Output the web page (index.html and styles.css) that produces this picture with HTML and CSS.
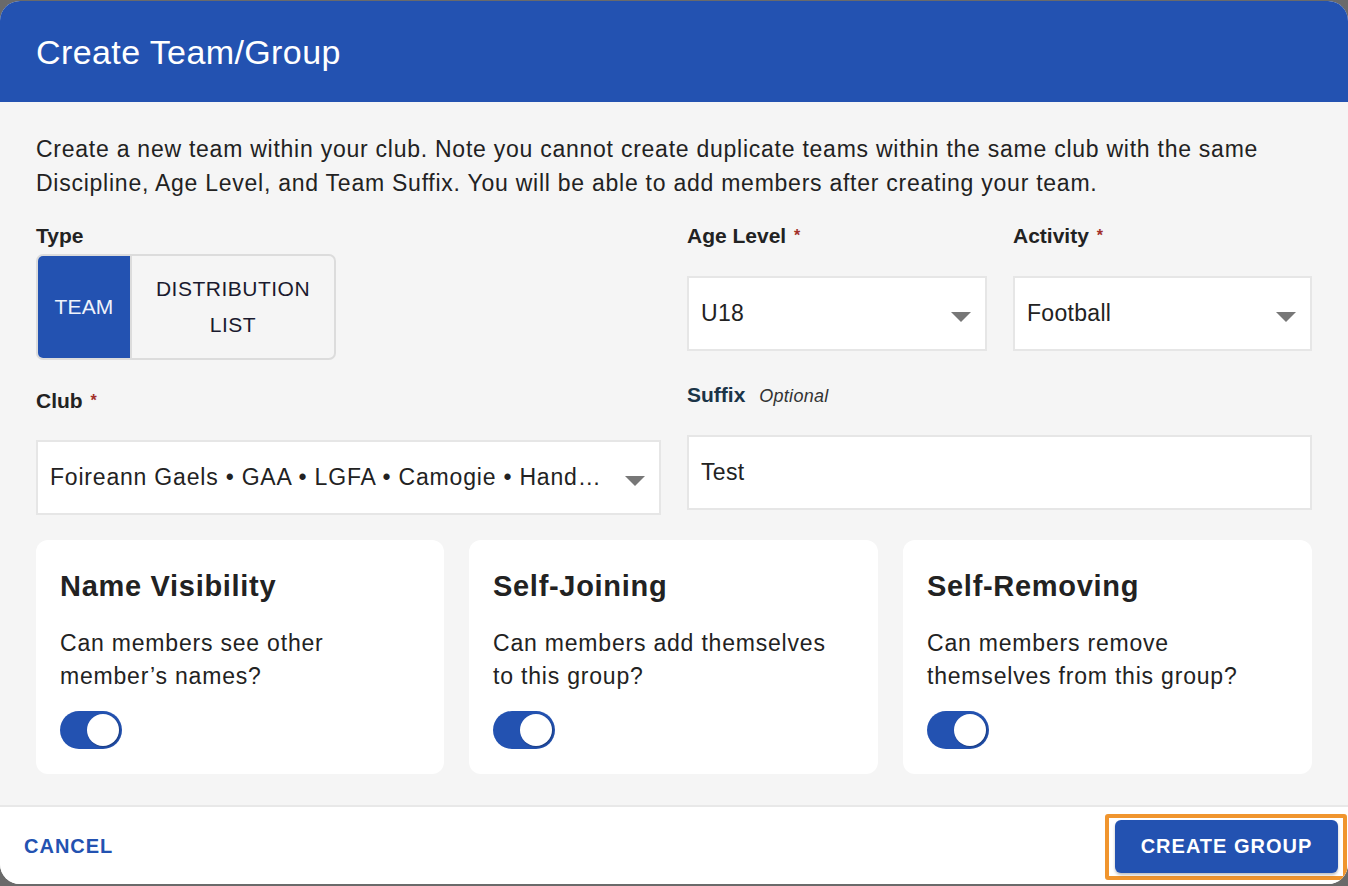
FILE: index.html
```html
<!DOCTYPE html>
<html lang="en">
<head>
<meta charset="utf-8">
<title>Create Team/Group</title>
<link rel="stylesheet" href="styles.css">
</head>
<body>
<div class="modal">
  <header class="modal-header">
    <h1 class="modal-title">Create Team/Group</h1>
  </header>
  <main class="modal-body">
    <p class="intro">Create a new team within your club. Note you cannot create duplicate teams within the same club with the same Discipline, Age Level, and Team Suffix. You will be able to add members after creating your team.</p>
    <div class="form-grid">
      <div class="col">
        <div class="field field-type">
          <div class="label">Type</div>
          <div class="segmented">
            <div class="seg seg-active">TEAM</div>
            <div class="seg">DISTRIBUTION<br>LIST</div>
          </div>
        </div>
        <div class="field field-club">
          <div class="label">Club <span class="req">*</span></div>
          <div class="select">
            <span class="select-value wide">Foireann Gaels • GAA • LGFA • Camogie • Hand…</span>
            <span class="caret"></span>
          </div>
        </div>
      </div>
      <div class="col">
        <div class="pair">
          <div class="field">
            <div class="label">Age Level <span class="req">*</span></div>
            <div class="select">
              <span class="select-value">U18</span>
              <span class="caret"></span>
            </div>
          </div>
          <div class="field">
            <div class="label">Activity <span class="req">*</span></div>
            <div class="select">
              <span class="select-value">Football</span>
              <span class="caret"></span>
            </div>
          </div>
        </div>
        <div class="field field-suffix">
          <div class="label suffix-label">Suffix <span class="optional">Optional</span></div>
          <div class="input"><span class="select-value">Test</span></div>
        </div>
      </div>
    </div>
    <div class="cards">
      <section class="card">
        <h2 class="card-title">Name Visibility</h2>
        <p class="card-text">Can members see other<br>member’s names?</p>
        <div class="toggle"><span class="knob"></span></div>
      </section>
      <section class="card">
        <h2 class="card-title">Self-Joining</h2>
        <p class="card-text">Can members add themselves<br>to this group?</p>
        <div class="toggle"><span class="knob"></span></div>
      </section>
      <section class="card">
        <h2 class="card-title">Self-Removing</h2>
        <p class="card-text">Can members remove<br>themselves from this group?</p>
        <div class="toggle"><span class="knob"></span></div>
      </section>
    </div>
  </main>
  <footer class="modal-footer">
    <button class="btn-cancel">CANCEL</button>
    <div class="btn-focus"><button class="btn-create">CREATE GROUP</button></div>
  </footer>
</div>
</body>
</html>
```
FILE: styles.css
```css
* { box-sizing: border-box; }
html, body { margin: 0; padding: 0; }
body {
  background: #6a6a6a;
  font-family: "Liberation Sans", Arial, Helvetica, sans-serif;
  color: #222;
  width: 1348px;
  height: 886px;
  overflow: hidden;
  padding-top: 1px;
}
.modal {
  width: 1348px;
  height: 883px;
  border-radius: 20px;
  overflow: hidden;
  background: #f5f5f5;
  display: flex;
  flex-direction: column;
}
.modal-header {
  background: #2352b1;
  height: 101px;
  flex: none;
  display: flex;
  align-items: center;
  padding: 0 36px;
}
.modal-title {
  margin: 0;
  color: #fff;
  font-weight: 400;
  font-size: 34px;
  line-height: 40px;
  letter-spacing: 0.4px;
}
.modal-body {
  flex: 1;
  padding: 30px 36px 0;
}
.intro {
  margin: 0;
  font-size: 23px;
  line-height: 34px;
  color: #222;
  letter-spacing: 0.75px;
}
.form-grid {
  display: grid;
  grid-template-columns: 625px 625px;
  column-gap: 26px;
  margin-top: 24px;
}
.col { display: flex; flex-direction: column; }
.pair {
  display: grid;
  grid-template-columns: 300px 299px;
  column-gap: 26px;
}
.label {
  font-size: 21px;
  line-height: 24px;
  font-weight: 700;
  color: #222;
}
.req { color: #a2302a; font-size: 16px; vertical-align: top; margin-left: 2px; }
.suffix-label { color: #1b3447; }
.optional {
  font-weight: 400;
  font-style: italic;
  font-size: 18px;
  color: #333;
  margin-left: 8px;
  letter-spacing: 0.3px;
}
.segmented {
  margin-top: 6px;
  width: 300px;
  height: 106px;
  border: 2px solid #dcdcdc;
  border-radius: 7px;
  display: flex;
  overflow: hidden;
  background: #f5f5f5;
}
.seg {
  flex: 1;
  display: flex;
  align-items: center;
  justify-content: center;
  text-align: center;
  font-size: 21px;
  line-height: 36px;
  color: #1a1a2e;
  letter-spacing: 0.5px;
}
.seg-active {
  flex: none;
  width: 94px;
  background: #2352b1;
  color: #eef2fb;
  letter-spacing: 0.2px;
  border-right: 2px solid #dcdcdc;
}
.pair .select { margin-top: 28px; }
.field-club { margin-top: 29px; }
.field-club .select { margin-top: 27px; }
.field-suffix { margin-top: 32px; }
.field-suffix .input { margin-top: 27px; }
.select, .input {
  height: 75px;
  background: #fff;
  border: 2px solid #e6e6e6;
  display: flex;
  align-items: center;
  padding: 0 14px 0 12px;
}
.select-value {
  flex: 1;
  font-size: 23px;
  color: #222;
  letter-spacing: 0.3px;
  white-space: nowrap;
  overflow: hidden;
}
.select-value.wide { letter-spacing: 0.8px; }
.caret {
  flex: none;
  width: 0;
  height: 0;
  border-left: 10px solid transparent;
  border-right: 10px solid transparent;
  border-top: 10px solid #777;
  margin-top: 6px;
}
.cards {
  margin-top: 25px;
  display: grid;
  grid-template-columns: 408px 409px 409px;
  column-gap: 25px;
}
.card {
  background: #fff;
  border-radius: 12px;
  padding: 28px 24px 24px;
  height: 234px;
}
.card-title {
  margin: 0;
  font-size: 29px;
  line-height: 36px;
  font-weight: 700;
  color: #222;
  letter-spacing: 0.7px;
}
.card-text {
  margin: 23px 0 0;
  font-size: 23px;
  line-height: 33px;
  color: #222;
  letter-spacing: 0.8px;
}
.toggle {
  margin-top: 18px;
  width: 62px;
  height: 38px;
  border-radius: 19px;
  background: #2352b1;
  position: relative;
}
.knob {
  position: absolute;
  right: 3px;
  top: 3px;
  width: 32px;
  height: 32px;
  border-radius: 50%;
  background: #fff;
  box-shadow: 1px 1px 2px rgba(0,0,0,0.3);
}
.modal-footer {
  flex: none;
  height: 79px;
  background: #fff;
  border-top: 2px solid #e8e8e8;
  display: flex;
  align-items: center;
  justify-content: space-between;
  padding: 0 0 0 24px;
}
.btn-cancel {
  background: none;
  border: none;
  padding: 0;
  font-family: inherit;
  font-size: 20px;
  font-weight: 700;
  color: #2352b1;
  letter-spacing: 1px;
  margin-top: 2px;
}
.btn-focus {
  border: 4px solid #f0952e;
  border-radius: 3px;
  padding: 2px 5px 3px 6px;
  margin-right: 1px;
  margin-top: 2px;
}
.btn-create {
  display: block;
  width: 223px;
  height: 53px;
  background: #2352b1;
  border: none;
  border-radius: 6px;
  color: #fff;
  font-family: inherit;
  font-size: 20px;
  font-weight: 700;
  letter-spacing: 1px;
  box-shadow: 0 2px 3px rgba(0,0,0,0.25);
}
```
